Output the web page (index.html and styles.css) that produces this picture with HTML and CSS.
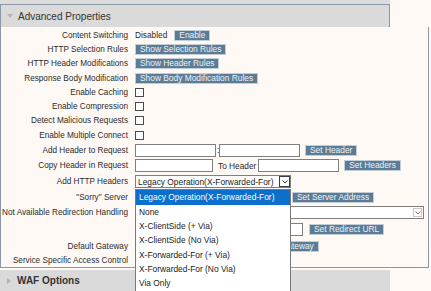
FILE: index.html
```html
<!DOCTYPE html>
<html lang="en">
<head>
    <meta charset="UTF-8">
    <title>Virtual Service Settings</title>
    <link rel="stylesheet" href="styles.css">
</head>
<body>
    <div class="prev-bar"></div>
    <div class="section-head">
        <span class="caret-down"></span>Advanced Properties
    </div>
    <div class="panel">
        <span class="lbl">Content Switching</span>
        <div class="val"><span>Disabled</span><button class="btn ml7">Enable</button></div>

        <span class="lbl">HTTP Selection Rules</span>
        <div class="val"><button class="btn">Show Selection Rules</button></div>

        <span class="lbl">HTTP Header Modifications</span>
        <div class="val"><button class="btn">Show Header Rules</button></div>

        <span class="lbl">Response Body Modification</span>
        <div class="val"><button class="btn">Show Body Modification Rules</button></div>

        <span class="lbl">Enable Caching</span>
        <div class="val"><input type="checkbox" class="chk"></div>

        <span class="lbl">Enable Compression</span>
        <div class="val"><input type="checkbox" class="chk"></div>

        <span class="lbl">Detect Malicious Requests</span>
        <div class="val"><input type="checkbox" class="chk"></div>

        <span class="lbl">Enable Multiple Connect</span>
        <div class="val"><input type="checkbox" class="chk"></div>

        <span class="lbl">Add Header to Request</span>
        <div class="val">
            <input type="text" class="txt w81">
            <span class="colon">:</span>
            <input type="text" class="txt w81">
            <button class="btn ml5">Set Header</button>
        </div>

        <span class="lbl">Copy Header in Request</span>
        <div class="val">
            <input type="text" class="txt w78">
            <span class="ml5">To Header</span>
            <input type="text" class="txt w81 ml2">
            <button class="btn ml5">Set Headers</button>
        </div>

        <span class="lbl">Add HTTP Headers</span>
        <div class="val">
            <div class="select-wrap">
                <div class="select open w156">
                    <span class="sel-text">Legacy Operation(X-Forwarded-For)</span>
                    <span class="arrow">
                        <svg width="6" height="4" viewBox="0 0 6 4"><path d="M0.5 0.5 L3 3 L5.5 0.5" fill="none" stroke="#333" stroke-width="1"/></svg>
                    </span>
                </div>
                <ul class="popup">
                    <li class="active">Legacy Operation(X-Forwarded-For)</li>
                    <li>None</li>
                    <li>X-ClientSide (+ Via)</li>
                    <li>X-ClientSide (No Via)</li>
                    <li>X-Forwarded-For (+ Via)</li>
                    <li>X-Forwarded-For (No Via)</li>
                    <li>Via Only</li>
                </ul>
            </div>
        </div>

        <span class="lbl">"Sorry" Server</span>
        <div class="val">
            <input type="text" class="txt w152">
            <button class="btn ml5">Set Server Address</button>
        </div>

        <span class="lbl">Not Available Redirection Handling</span>
        <div class="val">
            <div class="select w289">
                <span class="sel-text"></span>
                <span class="arrow">
                    <svg width="6" height="4" viewBox="0 0 6 4"><path d="M0.5 0.5 L3 3 L5.5 0.5" fill="none" stroke="#777" stroke-width="1"/></svg>
                </span>
            </div>
        </div>

        <span class="lbl"></span>
        <div class="val">
            <input type="text" class="txt w168">
            <button class="btn ml6">Set Redirect URL</button>
        </div>

        <span class="lbl">Default Gateway</span>
        <div class="val">
            <input type="text" class="txt w92">
            <button class="btn ml5">Set Default Gateway</button>
        </div>

        <span class="lbl">Service Specific Access Control</span>
        <div class="val"></div>
    </div>
    <div class="section-head closed">
        <span class="caret-right"></span>WAF Options
    </div>
</body>
</html>
```

FILE: styles.css
```css
body {
    margin: 0;
    padding: 0;
    background-color: #fff9f6;
    font-family: "Liberation Sans", Arial, sans-serif;
    font-size: 8.3px;
    color: #2b2b2b;
    overflow: hidden;
}

.prev-bar {
    width: 390px;
    height: 4px;
    background-color: #dcdcdc;
}

.section-head {
    width: 390px;
    height: 23px;
    box-sizing: border-box;
    display: flex;
    align-items: center;
    padding-left: 6px;
    background-color: #dadada;
    border: 1px solid #8a99a5;
    border-bottom: none;
    font-size: 10px;
    color: #333;
}

.section-head.closed {
    margin-top: 2px;
    height: 22px;
    border: none;
    padding-left: 7px;
    font-weight: bold;
}

.caret-down {
    width: 0;
    height: 0;
    border-left: 3.5px solid transparent;
    border-right: 3.5px solid transparent;
    border-top: 4px solid #b4b4b4;
    margin-right: 5px;
}

.caret-right {
    width: 0;
    height: 0;
    border-top: 3.5px solid transparent;
    border-bottom: 3.5px solid transparent;
    border-left: 4px solid #b4b4b4;
    margin-right: 6px;
}

.panel {
    width: 429px;
    box-sizing: border-box;
    border: 1px solid #8a99a5;
    border-top: none;
    padding-top: 1px;
    display: grid;
    grid-template-columns: 127px 1fr;
    grid-template-rows: repeat(8, 14.3px) 15.6px 16px 16px 15px 16px 18px 16px 12px;
    column-gap: 7px;
    align-items: center;
}

.lbl {
    display: flex;
    justify-content: flex-end;
    white-space: nowrap;
    font-size: 8.2px;
    color: #2b2b2b;
}

.val {
    display: flex;
    align-items: center;
    white-space: nowrap;
    height: 100%;
}

.btn {
    height: 11px;
    margin: 0;
    padding: 0 4px;
    border: 1px solid #c3cfd8;
    background-color: #5c7c95;
    color: #eef2f5;
    font-family: "Liberation Sans", Arial, sans-serif;
    font-size: 8.4px;
    line-height: 9px;
    white-space: nowrap;
}

.chk {
    appearance: none;
    -webkit-appearance: none;
    width: 9px;
    height: 9px;
    margin: 0;
    border: 1px solid #4a4a4a;
    background: #fff;
}

.txt {
    height: 13px;
    box-sizing: border-box;
    margin: 0;
    padding: 0;
    border: 1px solid #7f7f7f;
    background: #fff;
}

.colon {
    margin: 0 1px 0 1px;
    width: 1px;
}

.w78 { width: 78px; }
.w81 { width: 81px; }
.w92 { width: 92px; }
.w152 { width: 152px; }
.w156 { width: 156px; }
.w168 { width: 168px; }
.w289 { width: 289px; }

.ml2 { margin-left: 2px; }
.ml5 { margin-left: 5px; }
.ml6 { margin-left: 6px; }
.ml7 { margin-left: 7px; }

.select-wrap {
    position: relative;
}

.select {
    height: 13px;
    box-sizing: border-box;
    display: flex;
    align-items: center;
    justify-content: space-between;
    border: 1px solid #7f7f7f;
    background: #fff;
    font-size: 8.4px;
}

.sel-text {
    padding-left: 2px;
    color: #222;
}

.arrow {
    width: 9px;
    height: 9px;
    margin-right: 1px;
    display: flex;
    align-items: center;
    justify-content: center;
    border: 1px solid #c8c8c8;
    box-sizing: border-box;
}

.select.open .arrow {
    width: 11px;
    height: 11px;
    margin-right: 0;
    border-color: #3c3c3c;
}

.popup {
    position: absolute;
    top: 14px;
    left: 0;
    z-index: 10;
    width: 156px;
    box-sizing: border-box;
    margin: 0;
    padding: 0;
    list-style: none;
    background: #fff;
    border: 1px solid #7a7a7a;
    font-size: 8.4px;
    color: #222;
}

.popup li {
    height: 14.3px;
    line-height: 14.3px;
    padding-left: 3px;
}

.popup li.active {
    background-color: #0b6fcb;
    color: #fff;
}
```
